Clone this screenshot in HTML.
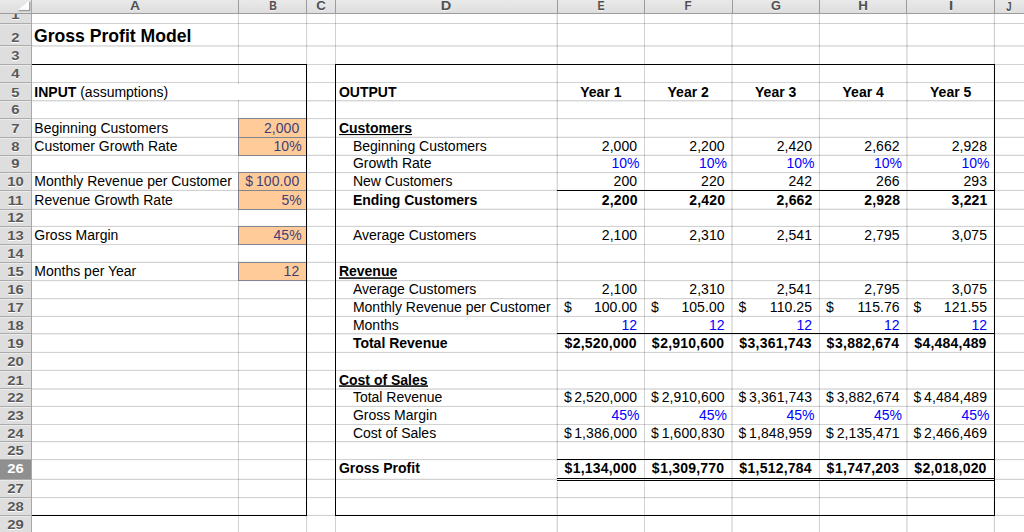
<!DOCTYPE html>
<html><head><meta charset="utf-8"><title>Gross Profit Model</title>
<style>
html,body{margin:0;padding:0;background:#fff;}
body{width:1024px;height:532px;overflow:hidden;position:relative;font-family:"Liberation Sans",sans-serif;font-size:14px;color:#000;}
div,span{position:absolute;white-space:pre;}
.t{height:18px;line-height:18px;}
.b{font-weight:bold;}
.bn{font-weight:bold;letter-spacing:0.2px;}
.n{letter-spacing:0.08px;}
.u{}
.bl{color:#0000ff;}
.in{color:#3f3f76;}
.hl{background:#d6d6d6;height:1px;}
.vl{background:#d6d6d6;width:1px;}
.k{background:#000;}
.rh{left:0.2px;width:31px;text-align:center;font-weight:bold;font-size:13px;color:#585858;transform:scaleX(1.14);text-shadow:0 1px 0 #fff;line-height:18px;height:18px;}
.ch{height:18px;line-height:18px;text-align:center;font-weight:bold;font-size:13px;color:#505050;text-shadow:0 1px 0 #f4f4f4;}
</style></head><body>

<div style="left:32px;top:22px;width:992px;height:1px;background:rgba(0,0,0,0.011)"></div>
<div style="left:32px;top:23px;width:992px;height:1px;background:rgba(0,0,0,0.175)"></div>
<div style="left:32px;top:45px;width:992px;height:1px;background:rgba(0,0,0,0.125)"></div>
<div style="left:32px;top:46px;width:992px;height:1px;background:rgba(0,0,0,0.102)"></div>
<div style="left:32px;top:64px;width:992px;height:1px;background:rgba(0,0,0,0.175)"></div>
<div style="left:32px;top:82px;width:992px;height:1px;background:rgba(0,0,0,0.175)"></div>
<div style="left:32px;top:100px;width:992px;height:1px;background:rgba(0,0,0,0.159)"></div>
<div style="left:32px;top:101px;width:992px;height:1px;background:rgba(0,0,0,0.068)"></div>
<div style="left:32px;top:118px;width:992px;height:1px;background:rgba(0,0,0,0.175)"></div>
<div style="left:32px;top:119px;width:992px;height:1px;background:rgba(0,0,0,0.023)"></div>
<div style="left:32px;top:136px;width:992px;height:1px;background:rgba(0,0,0,0.045)"></div>
<div style="left:32px;top:137px;width:992px;height:1px;background:rgba(0,0,0,0.175)"></div>
<div style="left:32px;top:154px;width:992px;height:1px;background:rgba(0,0,0,0.045)"></div>
<div style="left:32px;top:155px;width:992px;height:1px;background:rgba(0,0,0,0.175)"></div>
<div style="left:32px;top:172px;width:992px;height:1px;background:rgba(0,0,0,0.175)"></div>
<div style="left:32px;top:173px;width:992px;height:1px;background:rgba(0,0,0,0.023)"></div>
<div style="left:32px;top:189px;width:992px;height:1px;background:rgba(0,0,0,0.023)"></div>
<div style="left:32px;top:190px;width:992px;height:1px;background:rgba(0,0,0,0.175)"></div>
<div style="left:32px;top:208px;width:992px;height:1px;background:rgba(0,0,0,0.068)"></div>
<div style="left:32px;top:209px;width:992px;height:1px;background:rgba(0,0,0,0.159)"></div>
<div style="left:32px;top:225px;width:992px;height:1px;background:rgba(0,0,0,0.023)"></div>
<div style="left:32px;top:226px;width:992px;height:1px;background:rgba(0,0,0,0.175)"></div>
<div style="left:32px;top:244px;width:992px;height:1px;background:rgba(0,0,0,0.175)"></div>
<div style="left:32px;top:261px;width:992px;height:1px;background:rgba(0,0,0,0.045)"></div>
<div style="left:32px;top:262px;width:992px;height:1px;background:rgba(0,0,0,0.175)"></div>
<div style="left:32px;top:280px;width:992px;height:1px;background:rgba(0,0,0,0.175)"></div>
<div style="left:32px;top:281px;width:992px;height:1px;background:rgba(0,0,0,0.023)"></div>
<div style="left:32px;top:298px;width:992px;height:1px;background:rgba(0,0,0,0.175)"></div>
<div style="left:32px;top:299px;width:992px;height:1px;background:rgba(0,0,0,0.023)"></div>
<div style="left:32px;top:315px;width:992px;height:1px;background:rgba(0,0,0,0.023)"></div>
<div style="left:32px;top:316px;width:992px;height:1px;background:rgba(0,0,0,0.175)"></div>
<div style="left:32px;top:333px;width:992px;height:1px;background:rgba(0,0,0,0.159)"></div>
<div style="left:32px;top:334px;width:992px;height:1px;background:rgba(0,0,0,0.068)"></div>
<div style="left:32px;top:351px;width:992px;height:1px;background:rgba(0,0,0,0.023)"></div>
<div style="left:32px;top:352px;width:992px;height:1px;background:rgba(0,0,0,0.175)"></div>
<div style="left:32px;top:369px;width:992px;height:1px;background:rgba(0,0,0,0.023)"></div>
<div style="left:32px;top:370px;width:992px;height:1px;background:rgba(0,0,0,0.175)"></div>
<div style="left:32px;top:388px;width:992px;height:1px;background:rgba(0,0,0,0.114)"></div>
<div style="left:32px;top:389px;width:992px;height:1px;background:rgba(0,0,0,0.114)"></div>
<div style="left:32px;top:405px;width:992px;height:1px;background:rgba(0,0,0,0.023)"></div>
<div style="left:32px;top:406px;width:992px;height:1px;background:rgba(0,0,0,0.175)"></div>
<div style="left:32px;top:424px;width:992px;height:1px;background:rgba(0,0,0,0.175)"></div>
<div style="left:32px;top:441px;width:992px;height:1px;background:rgba(0,0,0,0.175)"></div>
<div style="left:32px;top:442px;width:992px;height:1px;background:rgba(0,0,0,0.045)"></div>
<div style="left:32px;top:459px;width:992px;height:1px;background:rgba(0,0,0,0.175)"></div>
<div style="left:32px;top:460px;width:992px;height:1px;background:rgba(0,0,0,0.023)"></div>
<div style="left:32px;top:478px;width:992px;height:1px;background:rgba(0,0,0,0.045)"></div>
<div style="left:32px;top:479px;width:992px;height:1px;background:rgba(0,0,0,0.175)"></div>
<div style="left:32px;top:497px;width:992px;height:1px;background:rgba(0,0,0,0.175)"></div>
<div style="left:32px;top:498px;width:992px;height:1px;background:rgba(0,0,0,0.023)"></div>
<div style="left:32px;top:514px;width:992px;height:1px;background:rgba(0,0,0,0.023)"></div>
<div style="left:32px;top:515px;width:992px;height:1px;background:rgba(0,0,0,0.175)"></div>
<div style="left:238px;top:14px;width:1px;height:518px;background:rgba(0,0,0,0.175)"></div>
<div style="left:306px;top:14px;width:1px;height:518px;background:rgba(0,0,0,0.175)"></div>
<div style="left:307px;top:14px;width:1px;height:518px;background:rgba(0,0,0,0.023)"></div>
<div style="left:335px;top:14px;width:1px;height:518px;background:rgba(0,0,0,0.175)"></div>
<div style="left:556px;top:14px;width:1px;height:518px;background:rgba(0,0,0,0.068)"></div>
<div style="left:557px;top:14px;width:1px;height:518px;background:rgba(0,0,0,0.159)"></div>
<div style="left:644px;top:14px;width:1px;height:518px;background:rgba(0,0,0,0.175)"></div>
<div style="left:731px;top:14px;width:1px;height:518px;background:rgba(0,0,0,0.114)"></div>
<div style="left:732px;top:14px;width:1px;height:518px;background:rgba(0,0,0,0.114)"></div>
<div style="left:818px;top:14px;width:1px;height:518px;background:rgba(0,0,0,0.023)"></div>
<div style="left:819px;top:14px;width:1px;height:518px;background:rgba(0,0,0,0.175)"></div>
<div style="left:906px;top:14px;width:1px;height:518px;background:rgba(0,0,0,0.125)"></div>
<div style="left:907px;top:14px;width:1px;height:518px;background:rgba(0,0,0,0.102)"></div>
<div style="left:993px;top:14px;width:1px;height:518px;background:rgba(0,0,0,0.034)"></div>
<div style="left:994px;top:14px;width:1px;height:518px;background:rgba(0,0,0,0.175)"></div>
<div style="left:0;top:0;width:1024px;height:13px;background:linear-gradient(#e9e9e9,#dedede)"></div>
<div style="left:0;top:13px;width:1024px;height:1px;background:#9c9c9c"></div>
<div style="left:238px;top:0;width:1px;height:13px;background:#9c9c9c"></div>
<div style="left:306px;top:0;width:1px;height:13px;background:#9c9c9c"></div>
<div style="left:335px;top:0;width:1px;height:13px;background:#9c9c9c"></div>
<div style="left:557px;top:0;width:1px;height:13px;background:#9c9c9c"></div>
<div style="left:644px;top:0;width:1px;height:13px;background:#9c9c9c"></div>
<div style="left:732px;top:0;width:1px;height:13px;background:#9c9c9c"></div>
<div style="left:819px;top:0;width:1px;height:13px;background:#9c9c9c"></div>
<div style="left:906px;top:0;width:1px;height:13px;background:#9c9c9c"></div>
<div style="left:994px;top:0;width:1px;height:13px;background:#9c9c9c"></div>
<div class="ch" style="left:114.9px;width:40px;top:-3.5px;transform:scaleX(1.07)">A</div>
<div class="ch" style="left:252.6px;width:40px;top:-3.5px;transform:scaleX(0.81)">B</div>
<div class="ch" style="left:301.1px;width:40px;top:-3.5px;transform:scaleX(1.02)">C</div>
<div class="ch" style="left:426.4px;width:40px;top:-3.5px;transform:scaleX(1.12)">D</div>
<div class="ch" style="left:580.9px;width:40px;top:-3.5px;transform:scaleX(0.82)">E</div>
<div class="ch" style="left:668.2px;width:40px;top:-3.5px;transform:scaleX(0.89)">F</div>
<div class="ch" style="left:755.7px;width:40px;top:-3.5px;transform:scaleX(0.98)">G</div>
<div class="ch" style="left:843.2px;width:40px;top:-3.5px;transform:scaleX(1.03)">H</div>
<div class="ch" style="left:930.7px;width:40px;top:-3.5px;transform:scaleX(1.15)">I</div>
<div class="ch" style="left:989.4px;width:40px;top:-2.1px;transform:scaleX(0.74)">J</div>
<div style="left:0;top:14px;width:31px;height:518px;background:#dedede"></div>
<div style="left:31px;top:0;width:1px;height:532px;background:#a8a8a8"></div>
<div style="left:0;top:23px;width:31px;height:1px;background:#ababab"></div>
<div style="left:0;top:24px;width:31px;height:1px;background:rgba(255,255,255,.4)"></div>
<div style="left:0;top:45px;width:31px;height:1px;background:#ababab"></div>
<div style="left:0;top:46px;width:31px;height:1px;background:rgba(255,255,255,.4)"></div>
<div style="left:0;top:64px;width:31px;height:1px;background:#ababab"></div>
<div style="left:0;top:65px;width:31px;height:1px;background:rgba(255,255,255,.4)"></div>
<div style="left:0;top:82px;width:31px;height:1px;background:#ababab"></div>
<div style="left:0;top:83px;width:31px;height:1px;background:rgba(255,255,255,.4)"></div>
<div style="left:0;top:100px;width:31px;height:1px;background:#ababab"></div>
<div style="left:0;top:101px;width:31px;height:1px;background:rgba(255,255,255,.4)"></div>
<div style="left:0;top:118px;width:31px;height:1px;background:#ababab"></div>
<div style="left:0;top:119px;width:31px;height:1px;background:rgba(255,255,255,.4)"></div>
<div style="left:0;top:137px;width:31px;height:1px;background:#ababab"></div>
<div style="left:0;top:138px;width:31px;height:1px;background:rgba(255,255,255,.4)"></div>
<div style="left:0;top:155px;width:31px;height:1px;background:#ababab"></div>
<div style="left:0;top:156px;width:31px;height:1px;background:rgba(255,255,255,.4)"></div>
<div style="left:0;top:172px;width:31px;height:1px;background:#ababab"></div>
<div style="left:0;top:173px;width:31px;height:1px;background:rgba(255,255,255,.4)"></div>
<div style="left:0;top:190px;width:31px;height:1px;background:#ababab"></div>
<div style="left:0;top:191px;width:31px;height:1px;background:rgba(255,255,255,.4)"></div>
<div style="left:0;top:209px;width:31px;height:1px;background:#ababab"></div>
<div style="left:0;top:210px;width:31px;height:1px;background:rgba(255,255,255,.4)"></div>
<div style="left:0;top:226px;width:31px;height:1px;background:#ababab"></div>
<div style="left:0;top:227px;width:31px;height:1px;background:rgba(255,255,255,.4)"></div>
<div style="left:0;top:244px;width:31px;height:1px;background:#ababab"></div>
<div style="left:0;top:245px;width:31px;height:1px;background:rgba(255,255,255,.4)"></div>
<div style="left:0;top:262px;width:31px;height:1px;background:#ababab"></div>
<div style="left:0;top:263px;width:31px;height:1px;background:rgba(255,255,255,.4)"></div>
<div style="left:0;top:280px;width:31px;height:1px;background:#ababab"></div>
<div style="left:0;top:281px;width:31px;height:1px;background:rgba(255,255,255,.4)"></div>
<div style="left:0;top:298px;width:31px;height:1px;background:#ababab"></div>
<div style="left:0;top:299px;width:31px;height:1px;background:rgba(255,255,255,.4)"></div>
<div style="left:0;top:316px;width:31px;height:1px;background:#ababab"></div>
<div style="left:0;top:317px;width:31px;height:1px;background:rgba(255,255,255,.4)"></div>
<div style="left:0;top:333px;width:31px;height:1px;background:#ababab"></div>
<div style="left:0;top:334px;width:31px;height:1px;background:rgba(255,255,255,.4)"></div>
<div style="left:0;top:352px;width:31px;height:1px;background:#ababab"></div>
<div style="left:0;top:353px;width:31px;height:1px;background:rgba(255,255,255,.4)"></div>
<div style="left:0;top:370px;width:31px;height:1px;background:#ababab"></div>
<div style="left:0;top:371px;width:31px;height:1px;background:rgba(255,255,255,.4)"></div>
<div style="left:0;top:388px;width:31px;height:1px;background:#ababab"></div>
<div style="left:0;top:389px;width:31px;height:1px;background:rgba(255,255,255,.4)"></div>
<div style="left:0;top:406px;width:31px;height:1px;background:#ababab"></div>
<div style="left:0;top:407px;width:31px;height:1px;background:rgba(255,255,255,.4)"></div>
<div style="left:0;top:424px;width:31px;height:1px;background:#ababab"></div>
<div style="left:0;top:425px;width:31px;height:1px;background:rgba(255,255,255,.4)"></div>
<div style="left:0;top:441px;width:31px;height:1px;background:#ababab"></div>
<div style="left:0;top:442px;width:31px;height:1px;background:rgba(255,255,255,.4)"></div>
<div style="left:0;top:459px;width:31px;height:1px;background:#ababab"></div>
<div style="left:0;top:460px;width:31px;height:1px;background:rgba(255,255,255,.4)"></div>
<div style="left:0;top:479px;width:31px;height:1px;background:#ababab"></div>
<div style="left:0;top:480px;width:31px;height:1px;background:rgba(255,255,255,.4)"></div>
<div style="left:0;top:497px;width:31px;height:1px;background:#ababab"></div>
<div style="left:0;top:498px;width:31px;height:1px;background:rgba(255,255,255,.4)"></div>
<div style="left:0;top:515px;width:31px;height:1px;background:#ababab"></div>
<div style="left:0;top:516px;width:31px;height:1px;background:rgba(255,255,255,.4)"></div>
<div style="left:0;top:460px;width:31px;height:19px;background:#8f8f8f"></div>
<div class="rh" style="top:5.50px;">1</div>
<div class="rh" style="top:28.50px;">2</div>
<div class="rh" style="top:46.50px;">3</div>
<div class="rh" style="top:64.50px;">4</div>
<div class="rh" style="top:83.50px;">5</div>
<div class="rh" style="top:100.50px;">6</div>
<div class="rh" style="top:119.50px;">7</div>
<div class="rh" style="top:137.50px;">8</div>
<div class="rh" style="top:154.50px;">9</div>
<div class="rh" style="top:172.50px;">10</div>
<div class="rh" style="top:191.50px;">11</div>
<div class="rh" style="top:208.50px;">12</div>
<div class="rh" style="top:226.50px;">13</div>
<div class="rh" style="top:244.50px;">14</div>
<div class="rh" style="top:262.50px;">15</div>
<div class="rh" style="top:280.50px;">16</div>
<div class="rh" style="top:298.50px;">17</div>
<div class="rh" style="top:316.50px;">18</div>
<div class="rh" style="top:334.50px;">19</div>
<div class="rh" style="top:352.50px;">20</div>
<div class="rh" style="top:371.50px;">21</div>
<div class="rh" style="top:388.50px;">22</div>
<div class="rh" style="top:406.50px;">23</div>
<div class="rh" style="top:424.50px;">24</div>
<div class="rh" style="top:441.50px;">25</div>
<div class="rh" style="top:460.20px;color:#fff;text-shadow:none;">26</div>
<div class="rh" style="top:479.50px;">27</div>
<div class="rh" style="top:497.50px;">28</div>
<div class="rh" style="top:515.50px;">29</div>
<div style="left:0;top:0;width:31px;height:13px;background:linear-gradient(#e9e9e9,#dedede)"></div>
<div style="left:0;top:13px;width:32px;height:1px;background:#9c9c9c"></div>
<svg style="position:absolute;left:16px;top:0" width="15" height="13" viewBox="0 0 15 13"><path d="M2.2 9.8 L13.2 0.8 L13.2 9.8 Z" fill="#fff"/><path d="M2.8 10.6 L13.8 10.6 L13.8 1.8" fill="none" stroke="#9a9a9a" stroke-width="1.3"/></svg>
<div style="left:237px;top:84px;width:3px;height:16px;background:#fff"></div>
<div style="left:238px;top:118px;width:69px;height:20px;background:#ffcc99;border:1px solid #84848e;box-sizing:border-box"></div>
<div style="left:238px;top:137px;width:69px;height:19px;background:#ffcc99;border:1px solid #84848e;box-sizing:border-box"></div>
<div style="left:238px;top:172px;width:69px;height:19px;background:#ffcc99;border:1px solid #84848e;box-sizing:border-box"></div>
<div style="left:238px;top:190px;width:69px;height:20px;background:#ffcc99;border:1px solid #84848e;box-sizing:border-box"></div>
<div style="left:238px;top:226px;width:69px;height:19px;background:#ffcc99;border:1px solid #84848e;box-sizing:border-box"></div>
<div style="left:238px;top:262px;width:69px;height:19px;background:#ffcc99;border:1px solid #84848e;box-sizing:border-box"></div>
<div class="k" style="left:32px;top:64px;width:275px;height:1px"></div>
<div class="k" style="left:32px;top:515px;width:275px;height:1px"></div>
<div class="k" style="left:306px;top:64px;width:1px;height:452px"></div>
<div class="k" style="left:335px;top:64px;width:660px;height:1px"></div>
<div class="k" style="left:335px;top:515px;width:660px;height:1px"></div>
<div class="k" style="left:335px;top:64px;width:1px;height:452px"></div>
<div class="k" style="left:994px;top:64px;width:1px;height:452px"></div>
<div class="k" style="left:557px;top:190px;width:438px;height:1px"></div>
<div class="k" style="left:557px;top:333px;width:438px;height:1px"></div>
<div class="k" style="left:557px;top:459px;width:438px;height:1px"></div>
<div style="left:557px;top:477px;width:437px;height:5px;background:#fff"></div>
<div style="left:644px;top:477px;width:1px;height:5px;background:rgba(0,0,0,0.175)"></div>
<div style="left:731px;top:477px;width:1px;height:5px;background:rgba(0,0,0,0.114)"></div>
<div style="left:732px;top:477px;width:1px;height:5px;background:rgba(0,0,0,0.114)"></div>
<div style="left:818px;top:477px;width:1px;height:5px;background:rgba(0,0,0,0.023)"></div>
<div style="left:819px;top:477px;width:1px;height:5px;background:rgba(0,0,0,0.175)"></div>
<div style="left:906px;top:477px;width:1px;height:5px;background:rgba(0,0,0,0.125)"></div>
<div style="left:907px;top:477px;width:1px;height:5px;background:rgba(0,0,0,0.102)"></div>
<div class="k" style="left:557px;top:478px;width:438px;height:1px"></div>
<div class="k" style="left:557px;top:480px;width:438px;height:1px"></div>
<div class="b" style="left:34.0px;top:24.90px;font-size:17.6px;height:22px;line-height:22px">Gross Profit Model</div>
<div class="t " style="left:34.3px;top:83.2px;"><b>INPUT</b> (assumptions)</div>
<div class="t " style="left:34.3px;top:119.2px;">Beginning Customers</div>
<div class="t " style="left:34.3px;top:137.2px;">Customer Growth Rate</div>
<div class="t " style="left:34.3px;top:172.2px;">Monthly Revenue per Customer</div>
<div class="t " style="left:34.3px;top:191.2px;">Revenue Growth Rate</div>
<div class="t " style="left:34.3px;top:226.2px;">Gross Margin</div>
<div class="t " style="left:34.3px;top:262.1px;">Months per Year</div>
<div class="t in n" style="right:724.7px;top:119.2px;">2,000</div>
<div class="t in" style="right:722.4px;top:137.2px;">10%</div>
<div class="t in" style="left:245.2px;top:172.2px;">$</div>
<div class="t in n" style="right:724.7px;top:172.2px;">100.00</div>
<div class="t in" style="right:722.4px;top:191.2px;">5%</div>
<div class="t in" style="right:722.4px;top:226.2px;">45%</div>
<div class="t in n" style="right:724.7px;top:262.1px;">12</div>
<div class="t b" style="left:338.9px;top:83.2px;">OUTPUT</div>
<div class="t b" style="left:338.9px;top:119.15px">Customers<span style="left:0;right:0;top:14.85px;height:1px;background:rgba(0,0,0,1.00)"></span><span style="left:0;right:0;top:15.85px;height:1px;background:rgba(0,0,0,0.09)"></span></div>
<div class="t " style="left:352.9px;top:137.2px;">Beginning Customers</div>
<div class="t " style="left:352.9px;top:154.2px;">Growth Rate</div>
<div class="t " style="left:352.9px;top:172.2px;">New Customers</div>
<div class="t b" style="left:352.9px;top:191.2px;">Ending Customers</div>
<div class="t " style="left:352.9px;top:226.2px;">Average Customers</div>
<div class="t b" style="left:338.9px;top:262.15px">Revenue<span style="left:0;right:0;top:14.85px;height:1px;background:rgba(0,0,0,0.67)"></span><span style="left:0;right:0;top:15.85px;height:1px;background:rgba(0,0,0,0.83)"></span></div>
<div class="t " style="left:352.9px;top:280.1px;">Average Customers</div>
<div class="t " style="left:352.9px;top:298.1px;">Monthly Revenue per Customer</div>
<div class="t " style="left:352.9px;top:316.1px;">Months</div>
<div class="t b" style="left:352.9px;top:334.1px;">Total Revenue</div>
<div class="t b" style="left:338.9px;top:371.15px">Cost of Sales<span style="left:0;right:0;top:13.85px;height:1px;background:rgba(0,0,0,0.67)"></span><span style="left:0;right:0;top:14.85px;height:1px;background:rgba(0,0,0,0.83)"></span></div>
<div class="t " style="left:352.9px;top:388.1px;">Total Revenue</div>
<div class="t " style="left:352.9px;top:406.1px;">Gross Margin</div>
<div class="t " style="left:352.9px;top:424.1px;">Cost of Sales</div>
<div class="t b" style="left:338.9px;top:459.1px;">Gross Profit</div>
<div class="t b" style="left:500.9px;width:200px;text-align:center;top:83.2px">Year 1</div>
<div class="t b" style="left:588.2px;width:200px;text-align:center;top:83.2px">Year 2</div>
<div class="t b" style="left:675.7px;width:200px;text-align:center;top:83.2px">Year 3</div>
<div class="t b" style="left:763.2px;width:200px;text-align:center;top:83.2px">Year 4</div>
<div class="t b" style="left:850.7px;width:200px;text-align:center;top:83.2px">Year 5</div>
<div class="t n" style="right:386.8px;top:137.2px;">2,000</div>
<div class="t n" style="right:299.3px;top:137.2px;">2,200</div>
<div class="t n" style="right:211.9px;top:137.2px;">2,420</div>
<div class="t n" style="right:124.3px;top:137.2px;">2,662</div>
<div class="t n" style="right:36.9px;top:137.2px;">2,928</div>
<div class="t n" style="right:386.8px;top:172.2px;">200</div>
<div class="t n" style="right:299.3px;top:172.2px;">220</div>
<div class="t n" style="right:211.9px;top:172.2px;">242</div>
<div class="t n" style="right:124.3px;top:172.2px;">266</div>
<div class="t n" style="right:36.9px;top:172.2px;">293</div>
<div class="t bn" style="right:386.3px;top:191.2px;">2,200</div>
<div class="t bn" style="right:298.8px;top:191.2px;">2,420</div>
<div class="t bn" style="right:211.4px;top:191.2px;">2,662</div>
<div class="t bn" style="right:123.8px;top:191.2px;">2,928</div>
<div class="t bn" style="right:36.4px;top:191.2px;">3,221</div>
<div class="t n" style="right:386.8px;top:226.2px;">2,100</div>
<div class="t n" style="right:299.3px;top:226.2px;">2,310</div>
<div class="t n" style="right:211.9px;top:226.2px;">2,541</div>
<div class="t n" style="right:124.3px;top:226.2px;">2,795</div>
<div class="t n" style="right:36.9px;top:226.2px;">3,075</div>
<div class="t n" style="right:386.8px;top:280.1px;">2,100</div>
<div class="t n" style="right:299.3px;top:280.1px;">2,310</div>
<div class="t n" style="right:211.9px;top:280.1px;">2,541</div>
<div class="t n" style="right:124.3px;top:280.1px;">2,795</div>
<div class="t n" style="right:36.9px;top:280.1px;">3,075</div>
<div class="t n" style="right:386.8px;top:298.1px;">100.00</div>
<div class="t " style="left:563.9px;top:298.1px;">$</div>
<div class="t n" style="right:299.3px;top:298.1px;">105.00</div>
<div class="t " style="left:651.1px;top:298.1px;">$</div>
<div class="t n" style="right:211.9px;top:298.1px;">110.25</div>
<div class="t " style="left:738.6px;top:298.1px;">$</div>
<div class="t n" style="right:124.3px;top:298.1px;">115.76</div>
<div class="t " style="left:826.0px;top:298.1px;">$</div>
<div class="t n" style="right:36.9px;top:298.1px;">121.55</div>
<div class="t " style="left:913.6px;top:298.1px;">$</div>
<div class="t bn" style="right:387.2px;top:334.1px;">2,520,000</div>
<div class="t b" style="left:564.4px;top:334.1px;">$</div>
<div class="t bn" style="right:299.7px;top:334.1px;">2,910,600</div>
<div class="t b" style="left:651.7px;top:334.1px;">$</div>
<div class="t bn" style="right:212.3px;top:334.1px;">3,361,743</div>
<div class="t b" style="left:739.2px;top:334.1px;">$</div>
<div class="t bn" style="right:124.8px;top:334.1px;">3,882,674</div>
<div class="t b" style="left:826.6px;top:334.1px;">$</div>
<div class="t bn" style="right:37.4px;top:334.1px;">4,484,489</div>
<div class="t b" style="left:914.2px;top:334.1px;">$</div>
<div class="t n" style="right:386.8px;top:388.1px;">2,520,000</div>
<div class="t " style="left:563.9px;top:388.1px;">$</div>
<div class="t n" style="right:299.3px;top:388.1px;">2,910,600</div>
<div class="t " style="left:651.1px;top:388.1px;">$</div>
<div class="t n" style="right:211.9px;top:388.1px;">3,361,743</div>
<div class="t " style="left:738.6px;top:388.1px;">$</div>
<div class="t n" style="right:124.3px;top:388.1px;">3,882,674</div>
<div class="t " style="left:826.0px;top:388.1px;">$</div>
<div class="t n" style="right:36.9px;top:388.1px;">4,484,489</div>
<div class="t " style="left:913.6px;top:388.1px;">$</div>
<div class="t n" style="right:386.8px;top:424.1px;">1,386,000</div>
<div class="t " style="left:563.9px;top:424.1px;">$</div>
<div class="t n" style="right:299.3px;top:424.1px;">1,600,830</div>
<div class="t " style="left:651.1px;top:424.1px;">$</div>
<div class="t n" style="right:211.9px;top:424.1px;">1,848,959</div>
<div class="t " style="left:738.6px;top:424.1px;">$</div>
<div class="t n" style="right:124.3px;top:424.1px;">2,135,471</div>
<div class="t " style="left:826.0px;top:424.1px;">$</div>
<div class="t n" style="right:36.9px;top:424.1px;">2,466,469</div>
<div class="t " style="left:913.6px;top:424.1px;">$</div>
<div class="t bn" style="right:387.2px;top:459.1px;">1,134,000</div>
<div class="t b" style="left:564.4px;top:459.1px;">$</div>
<div class="t bn" style="right:299.7px;top:459.1px;">1,309,770</div>
<div class="t b" style="left:651.7px;top:459.1px;">$</div>
<div class="t bn" style="right:212.3px;top:459.1px;">1,512,784</div>
<div class="t b" style="left:739.2px;top:459.1px;">$</div>
<div class="t bn" style="right:124.8px;top:459.1px;">1,747,203</div>
<div class="t b" style="left:826.6px;top:459.1px;">$</div>
<div class="t bn" style="right:37.4px;top:459.1px;">2,018,020</div>
<div class="t b" style="left:914.2px;top:459.1px;">$</div>
<div class="t bl" style="right:384.5px;top:154.2px;">10%</div>
<div class="t bl n" style="right:386.8px;top:316.1px;">12</div>
<div class="t bl" style="right:384.5px;top:406.1px;">45%</div>
<div class="t bl" style="right:297.0px;top:154.2px;">10%</div>
<div class="t bl n" style="right:299.3px;top:316.1px;">12</div>
<div class="t bl" style="right:297.0px;top:406.1px;">45%</div>
<div class="t bl" style="right:209.6px;top:154.2px;">10%</div>
<div class="t bl n" style="right:211.9px;top:316.1px;">12</div>
<div class="t bl" style="right:209.6px;top:406.1px;">45%</div>
<div class="t bl" style="right:122.0px;top:154.2px;">10%</div>
<div class="t bl n" style="right:124.3px;top:316.1px;">12</div>
<div class="t bl" style="right:122.0px;top:406.1px;">45%</div>
<div class="t bl" style="right:34.6px;top:154.2px;">10%</div>
<div class="t bl n" style="right:36.9px;top:316.1px;">12</div>
<div class="t bl" style="right:34.6px;top:406.1px;">45%</div>
</body></html>
